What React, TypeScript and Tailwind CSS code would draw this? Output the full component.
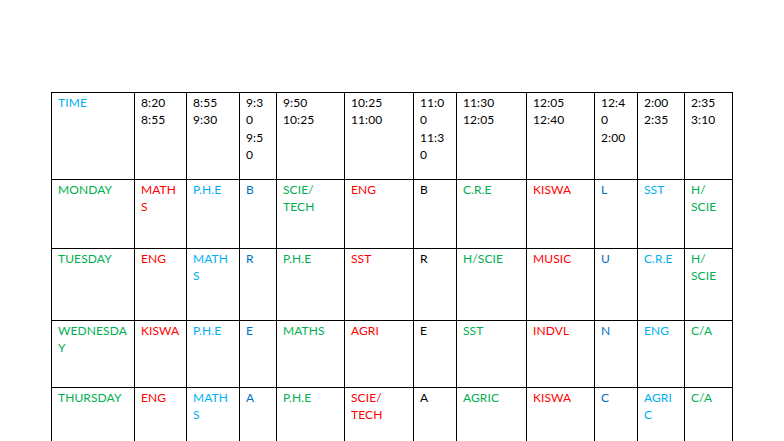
const LB = 'text-[#00b0f0]';
const GR = 'text-[#00b050]';
const RD = 'text-[#ff0000]';
const BL = 'text-[#0070c0]';
const BK = 'text-black';

type Cell = { lines: string[]; color: string };

// column widths and row heights taken from the screenshot
const colClasses = [
  'w-[83px]',
  'w-[52px]',
  'w-[53px]',
  'w-[37px]',
  'w-[68px]',
  'w-[69px]',
  'w-[43px]',
  'w-[70px]',
  'w-[68px]',
  'w-[43px]',
  'w-[47px]',
  'w-[48px]',
];
const rowClasses = ['h-[87px]', 'h-[69px]', 'h-[72px]', 'h-[67px]', 'h-[80px]'];

const c = (text: string, color: string): Cell => ({ lines: text.split('|'), color });

const rows: Cell[][] = [
  [
    c('TIME', LB),
    c('8:20|8:55', BK),
    c('8:55|9:30', BK),
    c('9:3|0|9:5|0', BK),
    c('9:50|10:25', BK),
    c('10:25|11:00', BK),
    c('11:0|0|11:3|0', BK),
    c('11:30|12:05', BK),
    c('12:05|12:40', BK),
    c('12:4|0|2:00', BK),
    c('2:00|2:35', BK),
    c('2:35|3:10', BK),
  ],
  [
    c('MONDAY', GR),
    c('MATH|S', RD),
    c('P.H.E', LB),
    c('B', BL),
    c('SCIE/|TECH', GR),
    c('ENG', RD),
    c('B', BK),
    c('C.R.E', GR),
    c('KISWA', RD),
    c('L', BL),
    c('SST', LB),
    c('H/|SCIE', GR),
  ],
  [
    c('TUESDAY', GR),
    c('ENG', RD),
    c('MATH|S', LB),
    c('R', BL),
    c('P.H.E', GR),
    c('SST', RD),
    c('R', BK),
    c('H/SCIE', GR),
    c('MUSIC', RD),
    c('U', BL),
    c('C.R.E', LB),
    c('H/|SCIE', GR),
  ],
  [
    c('WEDNESDA|Y', GR),
    c('KISWA', RD),
    c('P.H.E', LB),
    c('E', BL),
    c('MATHS', GR),
    c('AGRI', RD),
    c('E', BK),
    c('SST', GR),
    c('INDVL', RD),
    c('N', BL),
    c('ENG', LB),
    c('C/A', GR),
  ],
  [
    c('THURSDAY', GR),
    c('ENG', RD),
    c('MATH|S', LB),
    c('A', BL),
    c('P.H.E', GR),
    c('SCIE/|TECH', RD),
    c('A', BK),
    c('AGRIC', GR),
    c('KISWA', RD),
    c('C', BL),
    c('AGRI|C', LB),
    c('C/A', GR),
  ],
];

export default function App() {
  return (
    <div className="w-[784px] h-[441px] overflow-hidden bg-white pt-[92px] pl-[51px] font-['Lato',_'Liberation_Sans',_sans-serif] text-[12px] leading-[17.3px]">
      <table className="table-fixed border-collapse w-[681px]">
        <colgroup>
          {colClasses.map((w, i) => (
            <col key={i} className={w} />
          ))}
        </colgroup>
        <tbody>
          {rows.map((row, r) => (
            <tr key={r} className={rowClasses[r]}>
              {row.map((cell, i) => (
                <td
                  key={i}
                  className={`border border-black align-top pl-[6px] pr-[4px] pt-[1px] whitespace-nowrap tracking-[0.1px] ${cell.color}`}
                >
                  {cell.lines.map((l, k) => (
                    <div key={k}>{l}</div>
                  ))}
                </td>
              ))}
            </tr>
          ))}
        </tbody>
      </table>
    </div>
  );
}
